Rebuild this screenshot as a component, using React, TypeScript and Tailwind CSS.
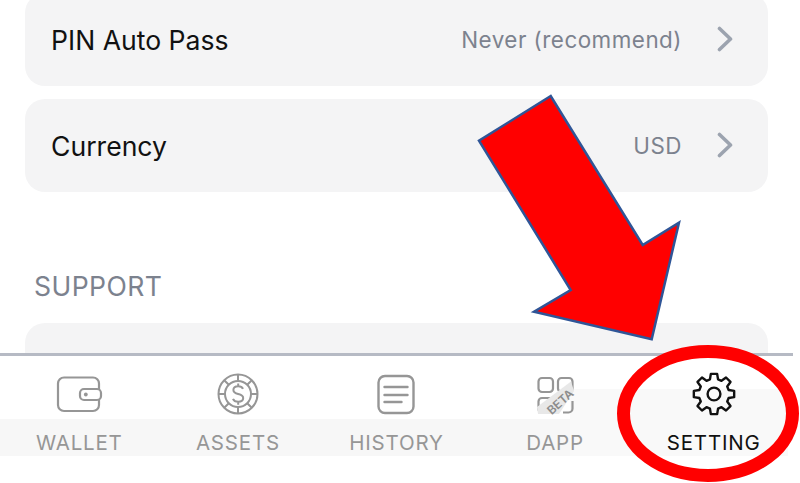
import { ReactNode } from 'react';

const FONT = 'font-["Inter","Liberation_Sans",sans-serif]';

// 8 tooth cog outline, centred in a 48 box
function cogPath() {
  const cx = 24;
  const cy = 24;
  const outer = 20.4;
  const root = 15.2;
  const pts: string[] = [];
  for (let i = 0; i < 8; i++) {
    const a = (i * Math.PI) / 4 - Math.PI / 2;
    const p = (r: number, d: number) =>
      `${(cx + r * Math.cos(a + d)).toFixed(2)} ${(cy + r * Math.sin(a + d)).toFixed(2)}`;
    pts.push(p(root, -0.27), p(outer, -0.155), p(outer, 0.155), p(root, 0.27));
  }
  return `M${pts.join('L')}Z`;
}

function WalletIcon() {
  return (
    <svg width="48" height="48" viewBox="0 0 48 48" fill="none" stroke="#969696" strokeWidth="2.2">
      <rect x="3" y="7.5" width="41" height="33.5" rx="6" />
      <rect x="25" y="19" width="21" height="11" rx="4" fill="#fff" />
      <circle cx="30.8" cy="24.5" r="1.9" fill="#969696" stroke="none" />
    </svg>
  );
}

function AssetsIcon() {
  const spokes = [0, 45, 90, 135];
  return (
    <svg width="48" height="48" viewBox="0 0 48 48" fill="none" stroke="#969696" strokeWidth="2">
      <circle cx="24" cy="24" r="19.5" />
      <circle cx="24" cy="24" r="13" />
      {spokes.map((deg) => (
        <g key={deg} transform={`rotate(${deg} 24 24)`}>
          <path d="M24 4.5V11M24 37V43.5" />
        </g>
      ))}
      <path d="M29 18.8c-.7-1.6-2.4-2.6-4.8-2.6-2.8 0-4.8 1.4-4.8 3.8 0 2.5 2.2 3.4 4.8 4 2.7.6 5 1.5 5 4 0 2.4-2.2 3.8-5 3.8-2.6 0-4.5-1.1-5.2-2.9M24.2 13.5v3M24.2 31.8v3" />
    </svg>
  );
}

function HistoryIcon() {
  return (
    <svg width="48" height="48" viewBox="0 0 48 48" fill="none" stroke="#969696" strokeWidth="2.4" strokeLinecap="round">
      <rect x="6.5" y="6" width="35" height="37" rx="6.5" />
      <path d="M12.5 17H35.5M12.5 25H35.5M12.5 32H29.5" />
    </svg>
  );
}

function DappIcon() {
  return (
    <svg width="48" height="48" viewBox="0 0 48 48" fill="none" stroke="#969696" strokeWidth="2.2">
      <rect x="7.5" y="8" width="14.5" height="14" rx="3.5" />
      <rect x="27" y="8" width="14.5" height="14" rx="3.5" />
      <rect x="7.5" y="28" width="14.5" height="14.5" rx="3.5" />
      <polygon points="40,11.6 43,21 28,44 7,44 6,37" fill="#e8e8e8" stroke="none" />
      <path d="M41.5 31V38.5a4 4 0 0 1-4 4H32" />
      <text
        x="29.5"
        y="36"
        transform="rotate(-42 29.5 32)"
        textAnchor="middle"
        fontSize="12"
        fontWeight="600"
        fill="#8c8c8c"
        stroke="none"
        fontFamily="Inter, sans-serif"
      >
        BETA
      </text>
    </svg>
  );
}

function CogIcon() {
  return (
    <svg width="48" height="48" viewBox="0 0 48 48" fill="none" stroke="#111" strokeWidth="2.4" strokeLinejoin="round">
      <path d={cogPath()} />
      <circle cx="24" cy="24" r="6.4" />
    </svg>
  );
}

function Chevron() {
  return (
    <svg width="16" height="26" viewBox="0 0 16 26" fill="none" stroke="#9ca3af" strokeWidth="3.6" strokeLinecap="round" strokeLinejoin="round">
      <path d="M2.5 2.5L13.5 13L2.5 23.5" />
    </svg>
  );
}

function Row({ label, value }: { label: string; value: string }) {
  return (
    <div className="flex h-[93px] items-center justify-between rounded-[20px] bg-[#f4f4f5] pl-[26px] pr-[35px]">
      <span className="pt-[2px] text-[26.6px] text-[#111]">{label}</span>
      <div className="flex items-center gap-[35px]">
        <span className="text-[22.4px] tracking-[0.5px] text-[#7c828e]">{value}</span>
        <Chevron />
      </div>
    </div>
  );
}

function Tab({ icon, label, active }: { icon: ReactNode; label: string; active?: boolean }) {
  return (
    <div className="flex flex-col items-center">
      {icon}
      <span
        className={
          active
            ? 'mt-[13px] text-[20.5px] leading-6 tracking-[0.8px] text-[#111]'
            : 'mt-[13px] text-[20.5px] leading-6 tracking-[0.8px] text-[#969696]'
        }
      >
        {label}
      </span>
    </div>
  );
}

export default function App() {
  return (
    <div className={`relative flex h-[483px] w-[800px] flex-col overflow-hidden bg-white ${FONT}`}>
      {/* Settings list, scrolled so the first card is cut off */}
      <main className="h-[353px] shrink-0 overflow-hidden px-[25px]">
        <div className="-mt-[7px] w-[743px]">
          <Row label="PIN Auto Pass" value="Never (recommend)" />
          <div className="mt-[13px]">
            <Row label="Currency" value="USD" />
          </div>
          <p className="mt-[77px] pl-[9px] text-[26.6px] leading-[34px] tracking-[0.4px] text-[#7c828e]">SUPPORT</p>
          <div className="mt-[20px] h-[93px] rounded-[20px] bg-[#f4f4f5]" />
        </div>
      </main>

      {/* Tab bar */}
      <nav className="relative h-[130px] w-[793px] border-t-[3px] border-[#b6bac4] pt-[14px]">
        {/* faint bands left in the picture behind the tabs */}
        <div className="absolute left-0 top-[63px] h-[37px] w-[570px] bg-[#f7f7f7]" />
        <div className="absolute left-[570px] top-[33px] h-[67px] w-[218px] bg-[#f9f9f9]" />
        <div className="relative grid grid-cols-5">
          <Tab icon={<WalletIcon />} label="WALLET" />
          <Tab icon={<AssetsIcon />} label="ASSETS" />
          <Tab icon={<HistoryIcon />} label="HISTORY" />
          <Tab icon={<DappIcon />} label="DAPP" />
          <Tab icon={<CogIcon />} label="SETTING" active />
        </div>
      </nav>

      {/* Annotation drawn on top of the screenshot */}
      <svg className="pointer-events-none absolute left-0 top-0" width="800" height="483" viewBox="0 0 800 483" fill="none">
        <polygon
          points="550.7,96 479,140.7 570.7,290 534,311.7 651.7,339.3 679,222.7 642.7,245"
          fill="#ff0000"
          stroke="#2f5597"
          strokeWidth="2.5"
        />
        <ellipse cx="708" cy="413.5" rx="84.5" ry="62" stroke="#ff0000" strokeWidth="13" />
      </svg>
    </div>
  );
}
